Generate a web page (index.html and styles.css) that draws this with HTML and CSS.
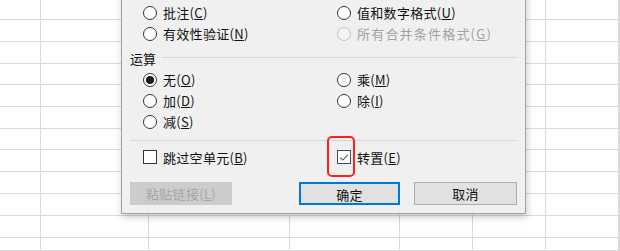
FILE: index.html
```html
<!DOCTYPE html>
<html lang="zh-CN">
<head>
<meta charset="utf-8">
<title>选择性粘贴</title>
<link rel="stylesheet" href="styles.css">
</head>
<body>
<div class="sheet">
  <div></div><div></div><div></div><div></div><div></div><div></div><div></div><div></div>
  <div></div><div></div><div></div><div></div><div></div><div></div><div></div><div></div>
  <div></div><div></div><div></div><div></div><div></div><div></div><div></div><div></div>
  <div></div><div></div><div></div><div></div><div></div><div></div><div></div><div></div>
  <div></div><div></div><div></div><div></div><div></div><div></div><div></div><div></div>
  <div></div><div></div><div></div><div></div><div></div><div></div><div></div><div></div>
  <div></div><div></div><div></div><div></div><div></div><div></div><div></div><div></div>
  <div></div><div></div><div></div><div></div><div></div><div></div><div></div><div></div>
  <div></div><div></div><div></div><div></div><div></div><div></div><div></div><div></div>
  <div></div><div></div><div></div><div></div><div></div><div></div><div></div><div></div>
  <div></div><div></div><div></div><div></div><div></div><div></div><div></div><div></div>
  <div></div><div></div><div></div><div></div><div></div><div></div><div></div><div></div>
</div>

<div class="dialog">
  <div class="opts">
    <label class="opt"><span class="radio"></span><span>批注(<u>C</u>)</span></label>
    <label class="opt"><span class="radio"></span><span>值和数字格式(<u>U</u>)</span></label>
    <label class="opt"><span class="radio"></span><span>有效性验证(<u>N</u>)</span></label>
    <label class="opt disabled"><span class="radio"></span><span>所有合并条件格式(<u>G</u>)</span></label>
  </div>

  <div class="group-head"><span>运算</span><span class="rule"></span></div>

  <div class="opts ops">
    <label class="opt"><span class="radio checked"></span><span>无(<u>O</u>)</span></label>
    <label class="opt"><span class="radio"></span><span>乘(<u>M</u>)</span></label>
    <label class="opt"><span class="radio"></span><span>加(<u>D</u>)</span></label>
    <label class="opt"><span class="radio"></span><span>除(<u>I</u>)</span></label>
    <label class="opt"><span class="radio"></span><span>减(<u>S</u>)</span></label>
  </div>

  <div class="sep"></div>

  <div class="opts checks">
    <label class="opt"><span class="box"></span><span>跳过空单元(<u>B</u>)</span></label>
    <label class="opt"><span class="box checked"><svg viewBox="0 0 13 13" width="13" height="13"><path d="M2.5 6.8 L5.2 9.3 L10.6 3.6" fill="none" stroke="#5a5a5a" stroke-width="1.2"/></svg><span class="highlight"></span></span><span>转置(<u>E</u>)</span></label>
  </div>

  <div class="buttons">
    <button class="btn disabled-btn">粘贴链接(<u>L</u>)</button>
    <button class="btn primary">确定</button>
    <button class="btn">取消</button>
  </div>
</div>
</body>
</html>
```

FILE: styles.css
```css
html, body {
  margin: 0;
  padding: 0;
}
body {
  width: 620px;
  height: 251px;
  overflow: hidden;
  background: #ffffff;
  position: relative;
  font-family: "Noto Sans CJK SC", "Microsoft YaHei", sans-serif;
  font-size: 13px;
  color: #111111;
}

.sheet {
  display: grid;
  grid-template-columns: 41px 108px 141px 110px 73px 73px 73px 1fr;
  grid-template-rows: 20px 22px 22px 21px 22px 22px 21px 22px 22px 22px 22px 1fr;
  width: 620px;
  height: 251px;
}
.sheet > div {
  border-right: 1px solid #d9d9d9;
  border-bottom: 1px solid #d9d9d9;
}

.dialog {
  position: absolute;
  left: 121px;
  top: -10px;
  width: 405px;
  height: 224px;
  box-sizing: border-box;
  background: #f0f0f0;
  border: 1px solid #a3a3a3;
  box-shadow: 1px 3px 7px rgba(0, 0, 0, 0.22);
  padding-top: 11px;
  display: flex;
  flex-direction: column;
}

.opts {
  display: grid;
  grid-template-columns: 194px 1fr;
  grid-auto-rows: 21px;
  padding-left: 21px;
}

.opt {
  display: flex;
  align-items: center;
  gap: 6px;
  line-height: 21px;
  white-space: nowrap;
  letter-spacing: 0.3px;
}
.opt u {
  text-underline-offset: 1px;
}

.radio {
  width: 14px;
  height: 14px;
  box-sizing: border-box;
  border-radius: 50%;
  border: 1px solid #333333;
  background: #ffffff;
  display: flex;
  align-items: center;
  justify-content: center;
  flex: none;
}
.radio.checked::after {
  content: "";
  width: 8px;
  height: 8px;
  border-radius: 50%;
  background: #1a1a1a;
}
.disabled {
  color: #a2a2a2;
  letter-spacing: 1.2px;
}
.disabled .radio {
  border-color: #c6c6c6;
  background: #f4f4f4;
}

.group-head {
  display: flex;
  align-items: center;
  gap: 6px;
  height: 20px;
  margin: 4px 8px 1px 8px;
}
.group-head .rule {
  flex: 1;
  height: 1px;
  background: #d7d7d7;
  margin-top: -1px;
}

.sep {
  height: 1px;
  background: #d7d7d7;
  margin: 8px 8px 0 8px;
}

.checks {
  margin-top: 6px;
  grid-auto-rows: 20px;
}

.box {
  position: relative;
  width: 14px;
  height: 14px;
  box-sizing: border-box;
  border: 1px solid #333333;
  background: #ffffff;
  flex: none;
  display: flex;
  align-items: center;
  justify-content: center;
}
.box svg {
  display: block;
}
.box.checked {
  border-color: #4a4a4a;
}

.highlight {
  position: absolute;
  left: -11px;
  top: -15px;
  width: 28px;
  height: 41px;
  box-sizing: border-box;
  border: 2.5px solid #ff1f1f;
  border-radius: 5px;
}

.buttons {
  display: flex;
  align-items: center;
  gap: 14px;
  margin: 15px 8px 0 8px;
}
.btn {
  font-family: inherit;
  font-size: 13px;
  height: 23px;
  padding: 0;
  box-sizing: border-box;
  background: #e1e1e1;
  border: 1px solid #adadad;
  color: #111111;
  line-height: 21px;
  letter-spacing: 0.3px;
}
.disabled-btn {
  width: 102px;
  background: #cccccc;
  border-color: #cccccc;
  color: #a6a6a6;
}
.primary {
  width: 101px;
  margin-left: auto;
  border: 2px solid #0078d7;
}
.btn:last-child {
  width: 103px;
}
```
